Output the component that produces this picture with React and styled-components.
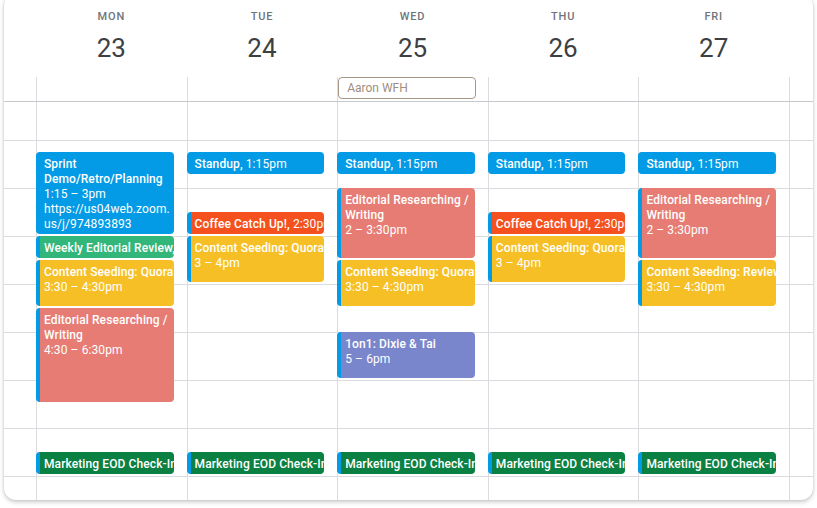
import React from 'react';
import styled, { createGlobalStyle } from 'styled-components';

const GlobalStyle = createGlobalStyle`
  html, body {
    margin: 0;
    padding: 0;
    background: #fff;
  }
  body {
    font-family: Roboto, "Noto Sans", Arial, sans-serif;
  }
`;

const COLS = '32px repeat(5, 1fr) 24px';
const HOUR = 48;
const FIRST_LINE = 38;
const FIRST_HOUR = 13;

const C = {
  peacock: '#039be5',
  sage: '#33b679',
  banana: '#f6bf26',
  flamingo: '#e67c73',
  tangerine: '#f4511e',
  basil: '#0b8043',
  lavender: '#7986cb',
};

const Page = styled.div`
  width: 817px;
  height: 508px;
  padding: 0 4px;
  box-sizing: border-box;
  overflow: hidden;
`;

// the card runs slightly above the viewport, so its top corners are hidden
const Card = styled.div`
  margin-top: -6px;
  height: 506px;
  background: #fff;
  border-radius: 12px;
  box-shadow: 0 2px 4px rgba(60, 64, 67, 0.28), 0 0 2px rgba(60, 64, 67, 0.15);
  display: flex;
  flex-direction: column;
  overflow: hidden;
`;

const HeaderRow = styled.div`
  display: grid;
  grid-template-columns: ${COLS};
  height: 83px;
`;

const DayHead = styled.div`
  display: flex;
  flex-direction: column;
  align-items: center;
  padding-top: 15px;
`;

const DayName = styled.div`
  font-size: 11px;
  line-height: 16px;
  font-weight: 500;
  letter-spacing: 0.8px;
  color: #70757a;
`;

const DayNum = styled.div`
  margin-top: 7px;
  font-size: 26px;
  line-height: 32px;
  color: #3c4043;
`;

const AllDayRow = styled.div`
  display: grid;
  grid-template-columns: ${COLS};
  height: 24px;
  border-bottom: 1px solid #c6c8cc;
`;

const Cell = styled.div`
  border-left: ${(p) => (p.$gutter ? 'none' : '1px solid #dadce0')};
  padding-right: 12px;
  min-width: 0;
`;

const Chip = styled.div`
  height: 22px;
  box-sizing: border-box;
  border: 1px solid #a89684;
  border-radius: 4px;
  color: #a08e7f;
  font-size: 12px;
  line-height: 20px;
  padding-left: 8px;
  white-space: nowrap;
  overflow: hidden;
`;

const TimeGrid = styled.div`
  flex: 1;
  display: grid;
  grid-template-columns: ${COLS};
  background-image: linear-gradient(to bottom, transparent 47px, #dadce0 47px);
  background-size: 100% ${HOUR}px;
  background-position: 0 ${FIRST_LINE + 1}px;
`;

const DayColumn = styled.div`
  position: relative;
  border-left: ${(p) => (p.$gutter ? 'none' : '1px solid #dadce0')};
`;

const Event = styled.div`
  position: absolute;
  left: -1px;
  right: 13px;
  box-sizing: border-box;
  background: ${(p) => p.$color};
  border-left: 4px solid ${C.peacock};
  border-radius: 4px;
  padding: 5px 0 0 4px;
  color: #fff;
  font-size: 12px;
  line-height: 15px;
  letter-spacing: 0.1px;
  overflow: hidden;
  white-space: ${(p) => (p.$compact ? 'nowrap' : 'normal')};
`;

const Title = styled.div`
  font-weight: 500;
  white-space: ${(p) => (p.$wrap ? 'normal' : 'nowrap')};
  overflow: hidden;
`;

const Strong = styled.span`
  font-weight: 500;
`;

const Line = styled.div`
  overflow-wrap: anywhere;
  padding-right: 2px;
`;

const days = [
  {
    name: 'MON',
    date: 23,
    events: [
      { title: 'Sprint Demo/Retro/Planning', time: '1:15 – 3pm', extra: 'https://us04web.zoom.us/j/974893893', start: 13.25, end: 15, color: C.peacock },
      { title: 'Weekly Editorial Review', time: '3pm', start: 15, end: 15.5, color: C.sage, compact: true },
      { title: 'Content Seeding: Quora', time: '3:30 – 4:30pm', start: 15.5, end: 16.5, color: C.banana },
      { title: 'Editorial Researching / Writing', time: '4:30 – 6:30pm', start: 16.5, end: 18.5, color: C.flamingo },
      { title: 'Marketing EOD Check-In', time: '7:30pm', start: 19.5, end: 19.75, color: C.basil, compact: true },
    ],
  },
  {
    name: 'TUE',
    date: 24,
    events: [
      { title: 'Standup', time: '1:15pm', start: 13.25, end: 13.5, color: C.peacock, compact: true },
      { title: 'Coffee Catch Up!', time: '2:30pm', start: 14.5, end: 15, color: C.tangerine, compact: true },
      { title: 'Content Seeding: Quora', time: '3 – 4pm', start: 15, end: 16, color: C.banana },
      { title: 'Marketing EOD Check-In', time: '7:30pm', start: 19.5, end: 19.75, color: C.basil, compact: true },
    ],
  },
  {
    name: 'WED',
    date: 25,
    allDay: 'Aaron WFH',
    events: [
      { title: 'Standup', time: '1:15pm', start: 13.25, end: 13.5, color: C.peacock, compact: true },
      { title: 'Editorial Researching / Writing', time: '2 – 3:30pm', start: 14, end: 15.5, color: C.flamingo },
      { title: 'Content Seeding: Quora', time: '3:30 – 4:30pm', start: 15.5, end: 16.5, color: C.banana },
      { title: '1on1: Dixie & Tai', time: '5 – 6pm', start: 17, end: 18, color: C.lavender },
      { title: 'Marketing EOD Check-In', time: '7:30pm', start: 19.5, end: 19.75, color: C.basil, compact: true },
    ],
  },
  {
    name: 'THU',
    date: 26,
    events: [
      { title: 'Standup', time: '1:15pm', start: 13.25, end: 13.5, color: C.peacock, compact: true },
      { title: 'Coffee Catch Up!', time: '2:30pm', start: 14.5, end: 15, color: C.tangerine, compact: true },
      { title: 'Content Seeding: Quora', time: '3 – 4pm', start: 15, end: 16, color: C.banana },
      { title: 'Marketing EOD Check-In', time: '7:30pm', start: 19.5, end: 19.75, color: C.basil, compact: true },
    ],
  },
  {
    name: 'FRI',
    date: 27,
    events: [
      { title: 'Standup', time: '1:15pm', start: 13.25, end: 13.5, color: C.peacock, compact: true },
      { title: 'Editorial Researching / Writing', time: '2 – 3:30pm', start: 14, end: 15.5, color: C.flamingo },
      { title: 'Content Seeding: Reviews', time: '3:30 – 4:30pm', start: 15.5, end: 16.5, color: C.banana },
      { title: 'Marketing EOD Check-In', time: '7:30pm', start: 19.5, end: 19.75, color: C.basil, compact: true },
    ],
  },
];

function CalendarEvent({ ev }) {
  const top = FIRST_LINE + (ev.start - FIRST_HOUR) * HOUR;
  const height = Math.max(22, (ev.end - ev.start) * HOUR - 2);
  const wrap = ev.end - ev.start >= 1.5;

  if (ev.compact) {
    return (
      <Event $color={ev.color} $compact style={{ top, height }}>
        <Strong>{ev.title},</Strong> {ev.time}
      </Event>
    );
  }

  return (
    <Event $color={ev.color} style={{ top, height }}>
      <Title $wrap={wrap}>{ev.title}</Title>
      <Line>{ev.time}</Line>
      {ev.extra && <Line>{ev.extra}</Line>}
    </Event>
  );
}

export default function App() {
  return (
    <>
      <GlobalStyle />
      <Page>
        <Card>
          <HeaderRow>
            <div />
            {days.map((d) => (
              <DayHead key={d.name}>
                <DayName>{d.name}</DayName>
                <DayNum>{d.date}</DayNum>
              </DayHead>
            ))}
            <div />
          </HeaderRow>

          <AllDayRow>
            <Cell $gutter />
            {days.map((d) => (
              <Cell key={d.name}>{d.allDay && <Chip>{d.allDay}</Chip>}</Cell>
            ))}
            <Cell />
          </AllDayRow>

          <TimeGrid>
            <DayColumn $gutter />
            {days.map((d) => (
              <DayColumn key={d.name}>
                {d.events.map((ev, i) => (
                  <CalendarEvent key={i} ev={ev} />
                ))}
              </DayColumn>
            ))}
            <DayColumn />
          </TimeGrid>
        </Card>
      </Page>
    </>
  );
}
